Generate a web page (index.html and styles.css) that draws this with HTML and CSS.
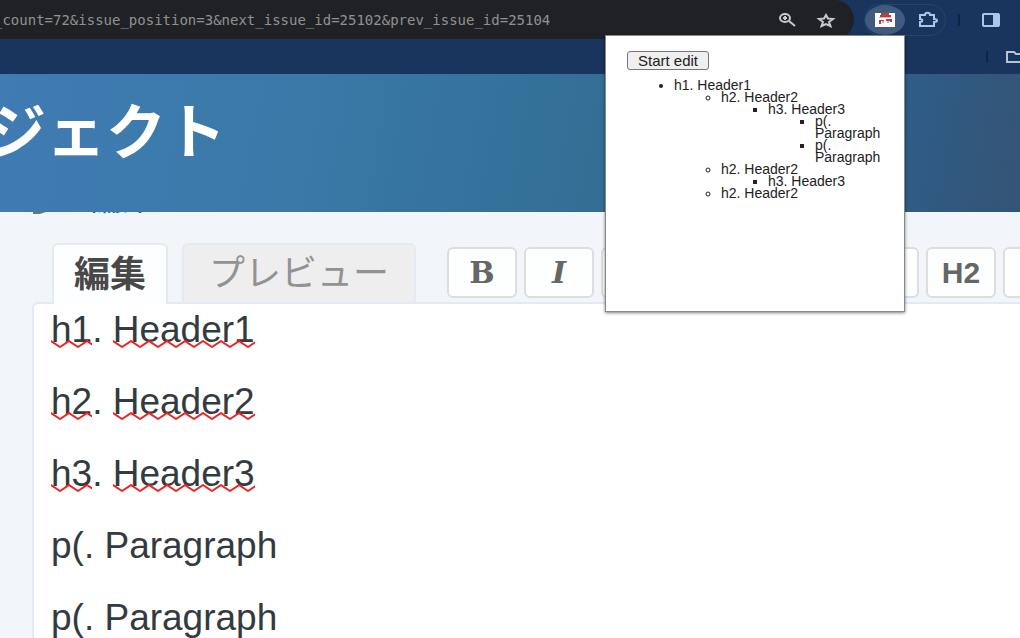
FILE: index.html
```html
<!DOCTYPE html>
<html lang="ja">
<head>
	<meta charset="UTF-8">
	<title>プロジェクト</title>
	<link rel="stylesheet" href="styles.css">
</head>
<body>

<div class="browser">
	<div class="toolbar">
		<div class="address">
			<span class="url">_count=72&amp;issue_position=3&amp;next_issue_id=25102&amp;prev_issue_id=25104</span>
			<button class="icon-btn" aria-label="Zoom">
				<svg width="20" height="16" viewBox="0 0 20 16" fill="none" stroke="#c7c9cc" stroke-width="2">
					<ellipse cx="7" cy="6" rx="5" ry="4"/>
					<path d="M11 9l6 5M5 6h4M7 4v4"/>
				</svg>
			</button>
			<button class="icon-btn" aria-label="Bookmark">
				<svg width="20" height="16" viewBox="0 0 20 16" fill="none" stroke="#c7c9cc" stroke-width="2">
					<path d="M10 3l2 3.500 5 .5-4 3 1.500 4-4.500-2-4.500 2 1.500-4-4-3 5-.5z"/>
				</svg>
			</button>
		</div>
		<div class="extensions">
			<button class="ext active" aria-label="Header editor">
				<svg width="20" height="16" viewBox="0 0 20 16">
					<path fill="#fff" d="M0 1h20v14H0z"/>
					<path fill="#b5413c" d="M6 1h8v2h2v2H5V3h1zM4 8h5v1H6v3H4zM11 7h6v3h-2V9h-4z"/>
					<path fill="#e9aaa5" d="M4 5h12v1H4zM7 9h2v2H7zM12 9h2v2h-2z"/>
				</svg>
			</button>
			<button class="ext puzzle" aria-label="Extensions">
				<svg width="22" height="18" viewBox="0 0 22 18" fill="none" stroke="#a9c6ef" stroke-width="2">
					<path d="M3 4h5c0-3 5-3 5 0h4v4c4 0 4 3 0 3v4H3v-4c3 0 3-3 0-3z"/>
				</svg>
			</button>
		</div>
		<span class="divider"></span>
		<button class="icon-btn side" aria-label="Side panel">
			<svg width="18" height="14" viewBox="0 0 18 14">
				<rect x="1" y="1" width="16" height="12" rx="1" fill="none" stroke="#a9c6ef" stroke-width="2"/>
				<path fill="#a9c6ef" d="M11 1h6v12h-6z"/>
			</svg>
		</button>
	</div>
	<div class="bookmarks">
		<span class="divider"></span>
		<button class="icon-btn" aria-label="All bookmarks">
			<svg width="22" height="14" viewBox="0 0 22 14" fill="none" stroke="#b9c3d3" stroke-width="2">
				<path d="M1 2h7l2 2h11v8H1z"/>
			</svg>
		</button>
	</div>
</div>

<header class="header">
	<h1>ジェクト</h1>
</header>

<main>
	<div class="contextual">
		<a href="#">
			<svg width="20" height="32" viewBox="0 0 20 32">
				<path fill="#77736a" d="M3 28L16 6l4 3-4 21-6 2H3z"/>
			</svg>
			<span>編集</span>
		</a>
	</div>

	<div class="tabs">
		<button class="tab selected">編集</button>
		<button class="tab preview">プレビュー</button>
		<div class="buttons">
			<button class="slab">B</button>
			<button class="slab italic">I</button>
			<button>S</button>
			<button>U</button>
			<button>C</button>
			<span class="space"></span>
			<button>H1</button>
			<button>H2</button>
			<button>H3</button>
		</div>
	</div>

	<div class="editor">
<textarea class="wiki-edit" aria-label="説明" spellcheck="false">
h1. Header1

h2. Header2

h3. Header3

p(. Paragraph

p(. Paragraph</textarea>
		<div class="spelling" aria-hidden="true">
			<div class="line"><i class="short"></i><i class="long"></i></div>
			<div class="line"><i class="short"></i><i class="long"></i></div>
			<div class="line"><i class="short"></i><i class="long"></i></div>
		</div>
	</div>
</main>

<div class="popup">
	<button id="start">Start edit</button>
	<ul>
		<li>h1. Header1
			<ul>
				<li>h2. Header2
					<ul>
						<li>h3. Header3
							<ul>
								<li>p(. Paragraph</li>
								<li>p(. Paragraph</li>
							</ul>
						</li>
					</ul>
				</li>
				<li>h2. Header2
					<ul>
						<li>h3. Header3</li>
					</ul>
				</li>
				<li>h2. Header2</li>
			</ul>
		</li>
	</ul>
</div>

</body>
</html>
```

FILE: styles.css
```css
*{
	box-sizing: border-box;
}
body{
	margin: 0;
	height: 100vh;
	display: flex;
	flex-direction: column;
	overflow: hidden;
	position: relative;
	background: #f2f6fa;
	font-family: "Liberation Sans", "Noto Sans CJK JP", sans-serif;
}
button{
	font-family: inherit;
	padding: 0;
}
svg{
	display: block;
}

/* browser */
.browser{
	background: #19345d;
}
.toolbar{
	display: flex;
	align-items: center;
	height: 39px;
}
.address{
	flex: 1;
	display: flex;
	align-items: center;
	gap: 18px;
	height: 39px;
	padding-right: 18px;
	background: #202124;
	border-radius: 0 20px 20px 0;
}
.url{
	flex: 1;
	margin-left: -6px;
	font: 14px "DejaVu Sans Mono", monospace;
	color: #909194;
	white-space: nowrap;
}
.icon-btn{
	border: none;
	background: none;
}
.extensions{
	display: flex;
	margin-left: 10px;
	border: 1px solid #29446c;
	border-radius: 16px;
}
.ext{
	display: flex;
	align-items: center;
	justify-content: center;
	width: 40px;
	height: 30px;
	border: none;
	border-radius: 50%;
	background: none;
}
.ext.active{
	background: #405a80;
}
.ext.puzzle{
	padding-left: 6px;
}
.divider{
	width: 2px;
	height: 12px;
	margin: 0 22px 0 12px;
	background: #10233f;
}
.side{
	margin-right: 20px;
}
.bookmarks{
	display: flex;
	align-items: center;
	justify-content: flex-end;
	height: 35px;
	overflow: hidden;
}
.bookmarks .divider{
	margin-right: 18px;
}
.bookmarks .icon-btn{
	margin-right: -8px;
}

/* redmine header */
.header{
	height: 138px;
	display: flex;
	align-items: center;
	background: linear-gradient(100deg, #407bb3 0%, #3a79a8 30%, #336f96 56%, #2f5c86 88%, #345474 100%);
}
.header h1{
	margin: 0 0 18px -14px;
	font-size: 60px;
	line-height: 60px;
	color: #fff;
	white-space: nowrap;
}

main{
	flex: 1;
	display: flex;
	flex-direction: column;
}
.contextual{
	height: 31px;
	overflow: hidden;
}
.contextual a{
	display: flex;
	gap: 36px;
	margin: -30px 0 0 30px;
	font-size: 36px;
	line-height: 32px;
	color: #2a6496;
	text-decoration: none;
}

/* tabs and toolbar */
.tabs{
	display: flex;
	height: 59px;
	padding-left: 52px;
	white-space: nowrap;
}
.tab{
	flex: none;
	padding: 0 20px;
	border: 2px solid #e4eaf1;
	border-bottom: none;
	border-radius: 6px 6px 0 0;
	background: #fdfeff;
	font-size: 36px;
	font-weight: bold;
	line-height: 36px;
	color: #484848;
}
.tab.selected{
	position: relative;
	margin-bottom: -2px;
}
.tab.preview{
	margin-left: 14px;
	padding: 0 25px;
	background: #eee;
	font-weight: normal;
	color: #929292;
}
.buttons{
	display: flex;
	gap: 7px;
	padding: 4px 0 4px 31px;
}
.buttons button{
	flex: none;
	width: 70px;
	border: 2px solid #ddd;
	border-radius: 6px;
	background: #fdfefe;
	font-size: 30px;
	font-weight: bold;
	color: #666;
}
.buttons .slab{
	font-family: "DejaVu Serif", serif;
}
.buttons .italic{
	font-style: italic;
}
.space{
	width: 10px;
}

/* textarea */
.editor{
	flex: 1;
	display: grid;
	margin-left: 32px;
	border: 2px solid #e4eaf1;
	border-width: 2px 0 0 2px;
	border-radius: 6px 0 0 0;
	background: #fff;
	overflow: hidden;
}
.wiki-edit,
.spelling{
	grid-area: 1 / 1;
	padding: 8px 17px;
}
.wiki-edit{
	width: 100%;
	border: none;
	outline: none;
	resize: none;
	overflow: hidden;
	background: none;
	font: 37px/36px "Liberation Sans", sans-serif;
	color: #333a40;
}
.spelling{
	pointer-events: none;
}
.line{
	display: flex;
	align-items: flex-end;
	gap: 21px;
	height: 36px;
	margin-bottom: 36px;
}
.line i{
	height: 8px;
	background: url("data:image/svg+xml,%3Csvg xmlns='http://www.w3.org/2000/svg' width='18' height='8'%3E%3Cpath d='M-9 7L0 1L9 7L18 1L27 7' fill='none' stroke='%23ee2222' stroke-width='2' stroke-linejoin='round'/%3E%3C/svg%3E") repeat-x;
}
.short{
	width: 41px;
}
.long{
	width: 142px;
}

/* extension popup */
.popup{
	position: absolute;
	top: 35px;
	right: 115px;
	width: 300px;
	height: 277px;
	padding: 15px 21px;
	border: 1px solid #888;
	background: #fff;
	box-shadow: 0 1px 3px rgba(0, 0, 0, .5);
	font-size: 14px;
	line-height: 12px;
	color: #222;
}
.popup ul{
	margin: 0;
	padding-left: 47px;
}
.popup > ul{
	margin-top: 9px;
}
#start{
	display: block;
	width: 82px;
	height: 19px;
	border: 1px solid #777;
	border-radius: 3px;
	background: #efefef;
	font-size: 15px;
	line-height: 15px;
	color: #222;
}
```
